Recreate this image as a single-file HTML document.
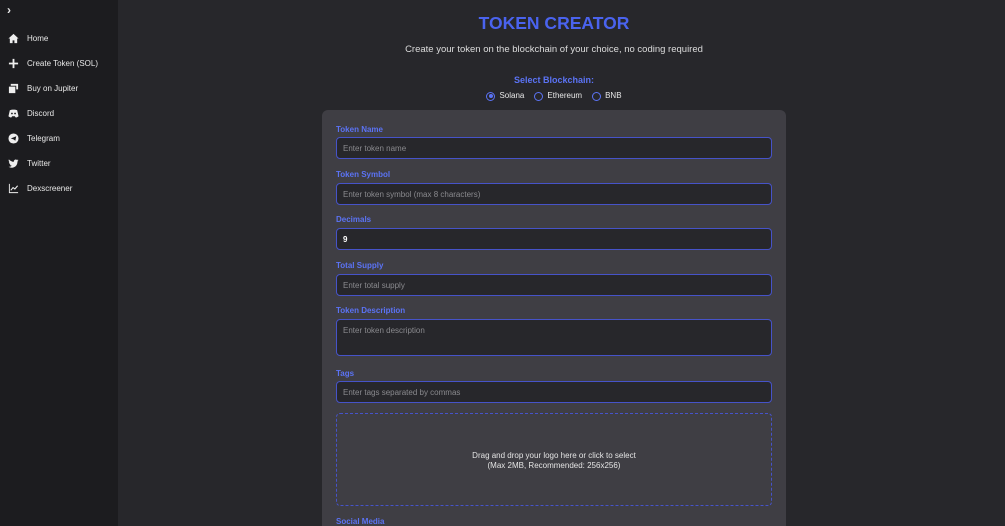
<!DOCTYPE html>
<html><head><style>
*{box-sizing:border-box;margin:0;padding:0}
html,body{width:1005px;height:526px;overflow:hidden}
body{background:#27272b;font-family:"Liberation Sans",sans-serif;position:relative}
.sb{position:absolute;left:0;top:0;width:118px;height:526px;background:#1c1c1f}
.sb .it{position:absolute;left:8px;display:flex;align-items:center;color:#e8e8e8;font-size:8px}
.sb .it svg{width:11px;height:11px;margin-right:8px;fill:#eee}
.t{position:absolute;left:0;width:1108px;text-align:center}
h1{position:absolute;top:13px;left:0;width:1108px;text-align:center;color:#4a63ee;font-size:17.5px;font-weight:bold}
.card{position:absolute;left:322px;top:110px;width:464px;height:416px;background:#3f3e44;border-radius:6px 6px 0 0}
.lb{position:absolute;left:14px;color:#5b73f5;font-size:8px;font-weight:bold}
.in{position:absolute;left:14px;width:436px;height:22px;background:#27272b;border:1px solid #4653c9;border-radius:4px;color:#8a8a8e;font-size:8px;padding:0 6px;display:flex;align-items:center}
.drop{position:absolute;left:14px;top:303px;width:436px;height:93px;border:1px dashed #4653c9;border-radius:4px;color:#e4e4e4;font-size:8px;text-align:center;padding-top:37px;line-height:10px}
.r{display:inline-flex;align-items:center;margin:0 5px;color:#e8e8e8;font-size:8px}
.r i{width:9px;height:9px;border:1px solid #5b73f5;border-radius:50%;margin-right:4px;display:inline-block;position:relative}
.r i.on:after{content:"";position:absolute;left:1.5px;top:1.5px;width:4px;height:4px;border-radius:50%;background:#5b73f5}
</style></head><body>
<div class="sb">
<div class="it" style="top:3px;left:7px;font-size:12px;font-weight:bold">&#x203A;</div>
<div class="it" style="top:33px"><svg viewBox="0 0 12 12"><path d="M6 1L0.5 6H2v5h3V8h2v3h3V6h1.5z"/></svg>Home</div>
<div class="it" style="top:58px"><svg viewBox="0 0 12 12"><path d="M5 1h2v4h4v2H7v4H5V7H1V5h4z"/></svg>Create Token (SOL)</div>
<div class="it" style="top:83px"><svg viewBox="0 0 12 12"><path d="M3 1h8v6H9V3H3zM1 4h7v7H1z"/></svg>Buy on Jupiter</div>
<div class="it" style="top:108px"><svg viewBox="0 0 12 12"><path d="M2 2.5C4 1.5 8 1.5 10 2.5L11.5 9C10 10.5 8.5 10.5 8 10L7.5 9H4.5L4 10C3.5 10.5 2 10.5.5 9z"/><circle cx="4.3" cy="6" r="1" fill="#1c1c1f"/><circle cx="7.7" cy="6" r="1" fill="#1c1c1f"/></svg>Discord</div>
<div class="it" style="top:133px"><svg viewBox="0 0 12 12"><circle cx="6" cy="6" r="5.5"/><path d="M3 6l6-2.5-1 5-2-1.5z" fill="#1c1c1f"/></svg>Telegram</div>
<div class="it" style="top:158px"><svg viewBox="0 0 12 12"><path d="M11.5 2.5l-1.2.5.9-1.3-1.4.5C8.5 1 6.3 2 6.2 4.2 4 4 2.3 3 1 1.5c-.7 1.3 0 2.7 1 3.3l-1-.3c0 1.2.8 2 2 2.3H2c.3 1 1.2 1.6 2.2 1.6C3 9.3 1.7 9.7.5 9.6 5 12.3 10.5 9.5 10.300 4z"/></svg>Twitter</div>
<div class="it" style="top:183px"><svg viewBox="0 0 12 12"><path d="M1 1h1v9h9v1H1z"/><path d="M3 8l2.5-3 2 1.5L10.5 3" stroke="#eee" fill="none" stroke-width="1.2"/></svg>Dexscreener</div>
</div>
<h1>TOKEN CREATOR</h1>
<div class="t" style="top:44px;color:#dcdcdc;font-size:9.5px">Create your token on the blockchain of your choice, no coding required</div>
<div class="t" style="top:75px;color:#5b73f5;font-size:9px;font-weight:bold">Select Blockchain:</div>
<div class="t" style="top:90px;height:12px;line-height:12px"><span class="r"><i class="on"></i>Solana</span><span class="r"><i></i>Ethereum</span><span class="r"><i></i>BNB</span></div>
<div class="card">
<div class="lb" style="top:15px">Token Name</div>
<div class="in" style="top:27px">Enter token name</div>
<div class="lb" style="top:60px">Token Symbol</div>
<div class="in" style="top:73px">Enter token symbol (max 8 characters)</div>
<div class="lb" style="top:105px">Decimals</div>
<div class="in" style="top:118px;color:#fff;font-weight:bold">9</div>
<div class="lb" style="top:151px">Total Supply</div>
<div class="in" style="top:164px">Enter total supply</div>
<div class="lb" style="top:196px">Token Description</div>
<div class="in" style="top:209px;height:37px;align-items:flex-start;padding-top:6px">Enter token description</div>
<div class="lb" style="top:259px">Tags</div>
<div class="in" style="top:271px">Enter tags separated by commas</div>
<div class="drop">Drag and drop your logo here or click to select<br>(Max 2MB, Recommended: 256x256)</div>
<div class="lb" style="top:407px">Social Media</div>
</div>
</body></html>
